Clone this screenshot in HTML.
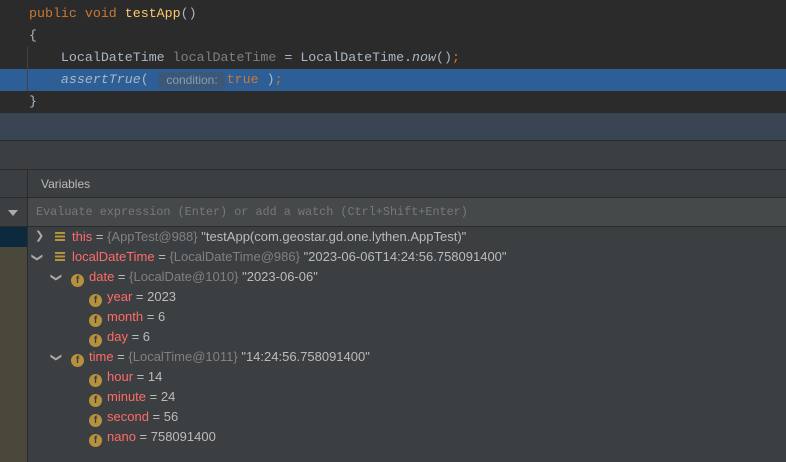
<!DOCTYPE html><html><head><style>
body{margin:0;width:786px;height:462px;overflow:hidden;background:#3c3f41;position:relative;font-family:"Liberation Sans",sans-serif}
.a{position:absolute}
.code{font-family:"Liberation Mono",monospace;font-size:13.3px;color:#a9b7c6;white-space:pre;line-height:22px;left:29px}
.k{color:#cc7832}.f{color:#ffc66d}.g{color:#808080}
.row{position:absolute;height:20px;line-height:20px;font-size:13px;color:#bbbbbb;white-space:pre}
.n{color:#ff6b68}.t{color:#808080}
.ic{display:inline-block;width:13px;height:13px;border-radius:50%;background:#b7923d;color:#3c3f41;font-size:10px;text-align:center;line-height:13px;vertical-align:-2px;margin-right:5px;font-weight:bold}
.ls{display:inline-block;width:10px;height:10px;vertical-align:-1px;margin-right:7px;background:repeating-linear-gradient(#b7923d 0 2px,transparent 2px 3.5px)}
.ar{position:absolute;color:#aaa;font-size:11px}
</style></head><body>
<div class="a" style="left:0;top:0;width:786px;height:113px;background:#2b2b2b"></div>
<div class="a" style="left:0;top:69px;width:786px;height:22px;background:#2d5e96"></div>
<div class="a" style="left:27px;top:47px;width:1px;height:44px;background:#444"></div>
<div class="a code" style="top:3px"><span class="k">public void </span><span class="f">testApp</span>()</div>
<div class="a code" style="top:25px">{</div>
<div class="a code" style="top:47px">    LocalDateTime <span class="g">localDateTime</span> = LocalDateTime.<i>now</i>()<span class="k">;</span></div>
<div class="a code" style="top:69px">    <i>assertTrue</i>(  <span style="display:inline-block;width:62px"></span><span class="k">true</span> )<span class="k">;</span></div>
<div class="a" style="left:159px;top:72px;width:66px;height:17px;background:#3b5878;border-radius:3px;color:#8a9bb0;font-size:12px;line-height:17px;text-align:center">condition:</div>
<div class="a code" style="top:91px">}</div>
<div class="a" style="left:0;top:113px;width:786px;height:27px;background:#3a4553"></div>
<div class="a" style="left:0;top:140px;width:786px;height:1px;background:#2b2b2b"></div>
<div class="a" style="left:0;top:169px;width:786px;height:1px;background:#2b2b2b"></div>
<div class="a" style="left:27px;top:170px;width:1px;height:292px;background:#2b2b2b"></div>
<div class="a" style="left:41px;top:177px;font-size:12px;color:#bbb">Variables</div>
<div class="a" style="left:0;top:197px;width:786px;height:1px;background:#2b2b2b"></div>
<div class="a" style="left:28px;top:198px;width:758px;height:28px;background:#45494a"></div>
<div class="a" style="left:8px;top:210px;width:0;height:0;border-left:5px solid transparent;border-right:5px solid transparent;border-top:6px solid #aaa"></div>
<div class="a" style="left:36px;top:205px;font-family:'Liberation Mono',monospace;font-size:11.8px;color:#787878">Evaluate expression (Enter) or add a watch (Ctrl+Shift+Enter)</div>
<div class="a" style="left:0;top:226px;width:786px;height:1px;background:#2b2b2b"></div>
<div class="a" style="left:0;top:227px;width:27px;height:20px;background:#0d293e"></div>
<div class="a" style="left:0;top:247px;width:27px;height:215px;background:#4a473b"></div>
<div class="ar" style="left:35px;top:229px">&#x276F;</div>
<div class="ar" style="left:33px;top:251px;transform:rotate(90deg)">&#x276F;</div>
<div class="ar" style="left:52px;top:271px;transform:rotate(90deg)">&#x276F;</div>
<div class="ar" style="left:52px;top:351px;transform:rotate(90deg)">&#x276F;</div>
<div class="row" style="left:55px;top:227px"><span class="ls"></span><span class="n">this</span> = <span class="t">{AppTest@988}</span> "testApp(com.geostar.gd.one.lythen.AppTest)"</div>
<div class="row" style="left:55px;top:247px"><span class="ls"></span><span class="n">localDateTime</span> = <span class="t">{LocalDateTime@986}</span> "2023-06-06T14:24:56.758091400"</div>
<div class="row" style="left:71px;top:267px"><span class="ic">f</span><span class="n">date</span> = <span class="t">{LocalDate@1010}</span> "2023-06-06"</div>
<div class="row" style="left:89px;top:287px"><span class="ic">f</span><span class="n">year</span> = 2023</div>
<div class="row" style="left:89px;top:307px"><span class="ic">f</span><span class="n">month</span> = 6</div>
<div class="row" style="left:89px;top:327px"><span class="ic">f</span><span class="n">day</span> = 6</div>
<div class="row" style="left:71px;top:347px"><span class="ic">f</span><span class="n">time</span> = <span class="t">{LocalTime@1011}</span> "14:24:56.758091400"</div>
<div class="row" style="left:89px;top:367px"><span class="ic">f</span><span class="n">hour</span> = 14</div>
<div class="row" style="left:89px;top:387px"><span class="ic">f</span><span class="n">minute</span> = 24</div>
<div class="row" style="left:89px;top:407px"><span class="ic">f</span><span class="n">second</span> = 56</div>
<div class="row" style="left:89px;top:427px"><span class="ic">f</span><span class="n">nano</span> = 758091400</div>
</body></html>
